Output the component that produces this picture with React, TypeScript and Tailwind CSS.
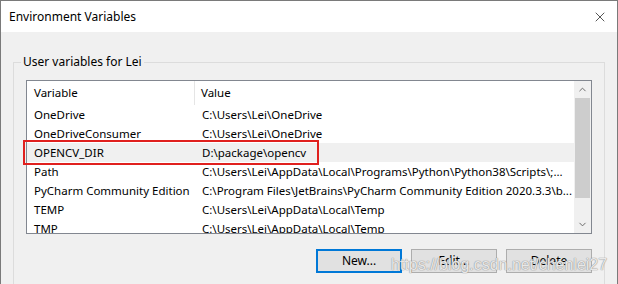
import { ChevronUp, ChevronDown, X } from "lucide-react";

const rows = [
  { name: "OneDrive", value: "C:\\Users\\Lei\\OneDrive" },
  { name: "OneDriveConsumer", value: "C:\\Users\\Lei\\OneDrive" },
  { name: "OPENCV_DIR", value: "D:\\package\\opencv", selected: true },
  { name: "Path", value: "C:\\Users\\Lei\\AppData\\Local\\Programs\\Python\\Python38\\Scripts\\;..." },
  { name: "PyCharm Community Edition", value: "C:\\Program Files\\JetBrains\\PyCharm Community Edition 2020.3.3\\b..." },
  { name: "TEMP", value: "C:\\Users\\Lei\\AppData\\Local\\Temp" },
  { name: "TMP", value: "C:\\Users\\Lei\\AppData\\Local\\Temp" },
];

export default function App() {
  return (
    <div
      className="relative h-[284px] w-[618px] overflow-hidden border-l border-t border-r border-[#7a7a7a] bg-[#f0f0f0] text-[11.5px] text-black"
      style={{ fontFamily: '"Segoe UI", "Noto Sans", sans-serif' }}
    >
      {/* title bar */}
      <div className="flex h-[31px] items-center justify-between bg-white pl-2 pr-[9px]">
        <span className="text-[12px]">Environment Variables</span>
        <X size={16} strokeWidth={1} />
      </div>

      {/* group box */}
      <div className="relative ml-3 mr-[12px] mt-[30px] h-[300px] border border-[#dcdcdc] px-3 pt-[17px]">
        <div className="absolute -top-[9px] left-[7px] bg-[#f0f0f0] px-[2px] text-[12px] leading-[16px]">
          User variables for Lei
        </div>

        {/* list */}
        <div className="relative flex h-[154px] w-[566px] border border-[#828790] bg-white">
          <div className="min-w-0 flex-1 overflow-hidden">
            <div className="flex h-[24px] items-center">
              <div className="w-[168px] shrink-0 border-r border-[#e5e5e5] pl-[7px] leading-[24px]">Variable</div>
              <div className="pl-[6px]">Value</div>
            </div>
            {rows.map((r) => (
              <div
                key={r.name}
                className={`flex h-[19px] items-center whitespace-nowrap ${r.selected ? "bg-[#f0f0f0]" : ""}`}
              >
                <div className="w-[168px] shrink-0 pl-[7px]">{r.name}</div>
                <div className="pl-[7px]">{r.value}</div>
              </div>
            ))}
          </div>
          {/* scrollbar */}
          <div className="flex w-[17px] shrink-0 flex-col bg-[#f0f0f0]">
            <div className="flex h-[17px] items-center justify-center text-[#606060]">
              <ChevronUp size={11} strokeWidth={2} />
            </div>
            <div className="mx-[1px] h-[100px] bg-[#cdcdcd]" />
            <div className="flex-1" />
            <div className="flex h-[17px] items-center justify-center text-[#606060]">
              <ChevronDown size={11} strokeWidth={2} />
            </div>
          </div>
        </div>

        {/* buttons */}
        <div className="mt-[15px] flex w-[566px] justify-end gap-[9px] text-[12px]">
          <button className="h-[24px] w-[86px] border-2 border-[#0078d7] bg-[#e1e1e1]">New...</button>
          <button className="h-[24px] w-[86px] border border-[#adadad] bg-[#e1e1e1]">Edit...</button>
          <button className="h-[24px] w-[86px] border border-[#adadad] bg-[#e1e1e1]">Delete</button>
        </div>
      </div>

      {/* red annotation box */}
      <div className="absolute left-[22px] top-[139px] h-[25px] w-[296px] border-2 border-[#e0201e]" />

      {/* watermark */}
      <div
        className="pointer-events-none absolute left-[390px] top-[252px] whitespace-nowrap text-[16px] leading-[24px] text-white/80"
        style={{ textShadow: "0 0 1px #8a8a8a, 0 0 1px #8a8a8a", fontFamily: '"Liberation Sans", sans-serif' }}
      >
        https://blog.csdn.net/chenlei27
      </div>
    </div>
  );
}
